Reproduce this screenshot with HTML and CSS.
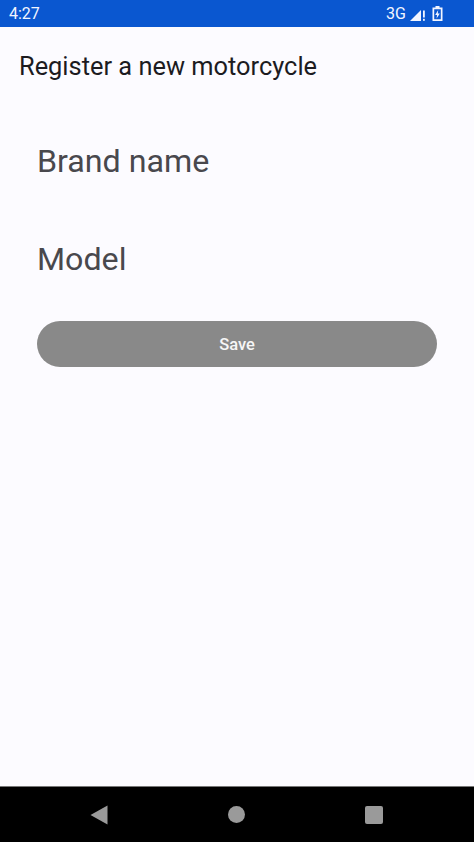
FILE: index.html
```html
<!DOCTYPE html>
<html>
	<head>
		<meta charset="UTF-8">
		<title>Register a new motorcycle</title>
		<link rel="stylesheet" href="styles.css">
	</head>
	<body>
		<div class="phone">
			<div class="status">
				<span class="time">4:27</span>
				<div class="status-right">
					<span class="net">3G</span>
					<svg class="signal" width="16" height="14" viewBox="0 0 16 14">
						<path d="M0 14 L11 3 V14 Z" fill="#f2f5ff"/>
						<rect x="13" y="3.5" width="1.8" height="7" fill="#f2f5ff"/>
						<rect x="13" y="11.8" width="1.8" height="2" fill="#f2f5ff"/>
					</svg>
					<svg class="battery" width="11" height="15" viewBox="0 0 11 15">
						<path d="M3.5 0 H7.5 V1.5 H10.5 V15 H0.5 V1.5 H3.5 Z M2.2 3.2 V13.3 H8.8 V3.2 Z" fill="#f2f5ff" fill-rule="evenodd"/>
						<path d="M6.2 4 L3.2 9 H5 L4.6 12.4 L7.8 7.4 H5.8 Z" fill="#f2f5ff"/>
					</svg>
				</div>
			</div>
			<div class="main">
				<h1>Register a new motorcycle</h1>
				<div class="form">
					<div class="field">Brand name</div>
					<div class="field">Model</div>
					<div class="save">Save</div>
				</div>
			</div>
			<div class="navbar">
				<svg width="18" height="20" viewBox="0 0 18 20"><path d="M17.5 0.5 V19.5 L0.5 10 Z" fill="#9a9a9a"/></svg>
				<div class="home"></div>
				<div class="recent"></div>
			</div>
		</div>
	</body>
</html>
```

FILE: styles.css
```css
html, body {
	margin: 0;
	padding: 0;
}
body {
	font-family: Roboto, "Liberation Sans", sans-serif;
	background: #fcfbff;
}
.phone {
	width: 474px;
	height: 842px;
	display: flex;
	flex-direction: column;
	overflow: hidden;
}
.status {
	height: 27px;
	background: #0a57d0;
	color: #f2f5ff;
	display: flex;
	align-items: center;
	justify-content: space-between;
	padding: 0 31px 0 9px;
	font-size: 16px;
	flex: none;
}
.status-right {
	display: flex;
	align-items: center;
	gap: 4px;
}
.battery {
	margin-left: 2px;
}
.main {
	flex: 1;
	padding: 0 37px 0 19px;
}
h1 {
	margin: 0;
	padding-top: 24px;
	font-size: 25.4px;
	line-height: 30px;
	font-weight: 400;
	color: #1c1b1f;
}
.form {
	margin-left: 18px;
	padding-top: 60px;
}
.field {
	font-size: 32.2px;
	line-height: 40px;
	height: 98px;
	color: #49484d;
}
.field + .field {
	height: 82px;
}
.save {
	height: 46px;
	border-radius: 23px;
	background: #898989;
	color: #f6f6f6;
	font-size: 16.5px;
	font-weight: 500;
	padding-top: 1px;
	box-sizing: border-box;
	display: flex;
	align-items: center;
	justify-content: center;
}
.navbar {
	height: 56px;
	background: #000;
	border-top: 1px solid #777;
	box-sizing: border-box;
	flex: none;
	display: flex;
	align-items: center;
	padding: 0 91px 0 90px;
	justify-content: space-between;
}
.home {
	width: 17px;
	height: 17px;
	border-radius: 50%;
	background: #9a9a9a;
}
.recent {
	width: 18px;
	height: 18px;
	border-radius: 2px;
	background: #9a9a9a;
}
```
